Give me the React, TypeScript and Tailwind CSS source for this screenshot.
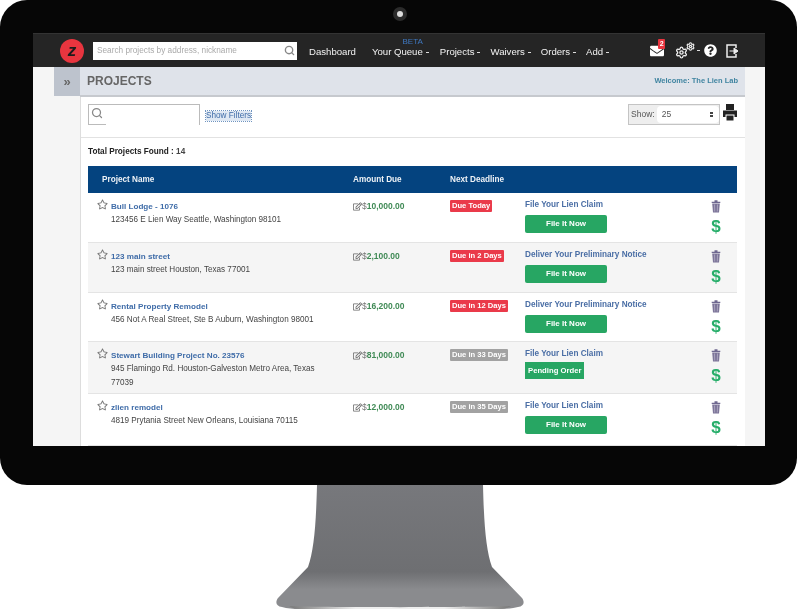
import { FaRegEdit, FaRegStar, FaQuestionCircle, FaEnvelope } from 'react-icons/fa';
import { Search, Settings } from 'lucide-react';

const projects = [
  { name: 'Bull Lodge - 1076', address: '123456 E Lien Way Seattle, Washington 98101', amount: '10,000.00', due: 'Due Today', urgent: true, action: 'File Your Lien Claim', rowClass: 'h-[50px] bg-white' },
  { name: '123 main street', address: '123 main street Houston, Texas 77001', amount: '2,100.00', due: 'Due in 2 Days', urgent: true, action: 'Deliver Your Preliminary Notice', rowClass: 'h-[50px] bg-[#f5f5f5]' },
  { name: 'Rental Property Remodel', address: '456 Not A Real Street, Ste B Auburn, Washington 98001', amount: '16,200.00', due: 'Due in 12 Days', urgent: true, action: 'Deliver Your Preliminary Notice', rowClass: 'h-[49px] bg-white' },
  { name: 'Stewart Building Project No. 23576', address: '945 Flamingo Rd. Houston-Galveston Metro Area, Texas 77039', amount: '81,000.00', due: 'Due in 33 Days', urgent: false, action: 'File Your Lien Claim', pending: true, rowClass: 'h-[52px] bg-[#f5f5f5]' },
  { name: 'zlien remodel', address: '4819 Prytania Street New Orleans, Louisiana 70115', amount: '12,000.00', due: 'Due in 35 Days', urgent: false, action: 'File Your Lien Claim', rowClass: 'h-[52px] bg-white' },
];

function NavItem({ label, caret = true }: { label: string; caret?: boolean }) {
  return (
    <span className="flex items-center gap-[3px] whitespace-nowrap leading-[10px]">
      {label}
      {caret && <span className="mt-[1px] h-[1px] w-[3px] bg-[#ddd]" />}
    </span>
  );
}

function TrashIcon() {
  return (
    <svg viewBox="0 0 10 13" className="h-[13px] w-[10px]">
      <path d="M3.5 1h3M.7 2.4h8.6" stroke="#6f6890" strokeWidth="1.4" />
      <path d="M1.2 3.4h7.6L8 12.6H2z" fill="#7d7599" />
      <path d="M3.5 4.5l.2 7M6.5 4.5l-.2 7" stroke="#b5b0c8" strokeWidth=".8" />
    </svg>
  );
}

function PrinterIcon() {
  return (
    <svg viewBox="0 0 14 17" className="h-[17px] w-[14px]" fill="#222">
      <path d="M3 0h8v6H3z" />
      <path d="M0 6.5h14V13h-2.5v-2.5h-9V13H0z" />
      <path d="M3.5 11.5h7V16.5h-7z" />
    </svg>
  );
}

function ProjectRow({ project }: { project: (typeof projects)[number] }) {
  return (
    <div className={`grid grid-cols-[265px_97px_75px_179px_24px] border-b border-[#e4e4e4] ${project.rowClass}`}>
      <div className="flex gap-[3px] pl-[9px] pt-[6px]">
        <FaRegStar className="h-[11px] w-[11px] shrink-0 text-[#777]" />
        <div className="w-[214px]">
          <div className="pt-[1px] text-[8.1px] font-bold leading-[13px] text-[#3f6ca8]">{project.name}</div>
          <div className="text-[8.15px] leading-[13.5px] text-[#444]">{project.address}</div>
        </div>
      </div>
      <div className="flex items-center self-start pt-[7px] text-[8.5px] font-bold leading-[12px] text-[#3f8a55]">
        <FaRegEdit className="h-[9px] w-[9px] text-[#666]" />
        <span className="font-normal text-[#777]">$</span>
        {project.amount}
      </div>
      <div className="flex items-start pt-[7px]">
        <span className={`rounded-[1px] px-[2px] text-[7.6px] font-bold leading-[12px] text-white ${project.urgent ? 'bg-[#ea3a4a]' : 'bg-[#a2a2a2]'}`}>
          {project.due}
        </span>
      </div>
      <div className="pt-[6px]">
        <div className="text-[8.2px] font-bold leading-[12px] text-[#4a6ea5]">{project.action}</div>
        {project.pending ? (
          <div className="mt-[2px] w-fit bg-[#27a663] px-[3px] text-[7.7px] font-bold leading-[17px] text-white">Pending Order</div>
        ) : (
          <button className="mt-[4px] block h-[18px] w-[82px] rounded-[2px] bg-[#27a663] text-center text-[8px] font-bold text-white">File It Now</button>
        )}
      </div>
      <div className="flex flex-col items-center pt-[7px]">
        <TrashIcon />
        <span className="mt-[4px] text-[17px] font-bold leading-[20px] text-[#27ae6a]">$</span>
      </div>
    </div>
  );
}

export default function App() {
  return (
    <div className="h-[610px] w-[800px] overflow-hidden bg-white font-['Liberation_Sans',Arial,sans-serif]">
      {/* Monitor bezel */}
      <div className="relative h-[485px] w-[797px] rounded-[27px] bg-[#060606] pl-[33px] pt-[33px]">
        <div className="absolute left-[393px] top-[7px] flex h-[14px] w-[14px] items-center justify-center rounded-full bg-[#2b2b2b]">
          <span className="h-[6px] w-[6px] rounded-full bg-[#ddd]" />
        </div>

        <div className="h-[413px] w-[732px] overflow-hidden border-t border-[#333] bg-[#f5f5f5] blur-[0.4px]">
          {/* Top bar */}
          <div className="flex h-[33px] items-center bg-[#252525] pl-[27px] text-[9.6px] text-[#f2f2f2]">
            <div className="flex h-[24px] w-[24px] items-center justify-center rounded-full bg-[#e8353f] text-[17px] font-bold italic leading-none text-[#1c1c1c]">z</div>
            <div className="ml-[9px] flex h-[18px] w-[204px] items-center justify-between bg-white pl-[4px] pr-[2px] text-[8.25px] text-[#aaa]">
              <span className="pt-[1px]">Search projects by address, nickname</span>
              <Search className="h-[11px] w-[11px] text-[#888]" strokeWidth={3} />
            </div>
            <div className="ml-[12px] flex items-center gap-[10px] pt-[2px]">
              <span className="mr-[6px] leading-[10px]">Dashboard</span>
              <span className="relative mr-[1px]">
                <NavItem label="Your Queue" />
                <span className="absolute -top-[9px] right-[6px] h-[7px] text-[8px] leading-[7px] text-[#3f78c0]">BETA</span>
              </span>
              <NavItem label="Projects" />
              <NavItem label="Waivers" />
              <NavItem label="Orders" />
              <NavItem label="Add" />
            </div>
            <div className="ml-[41px] flex items-center">
              <span className="relative">
                <FaEnvelope className="h-[14px] w-[14px] text-white" />
                <span className="absolute -right-[1px] -top-[5px] h-[10px] w-[7px] rounded-[1px] bg-[#e8353f] text-center text-[7px] font-bold leading-[10px] text-white">2</span>
              </span>
              <span className="ml-[11px] flex items-start">
                <Settings className="mt-[4px] h-[13px] w-[13px] text-[#eee]" strokeWidth={2.5} />
                <Settings className="-ml-[2px] h-[9px] w-[9px] text-[#eee]" strokeWidth={3} />
              </span>
              <span className="ml-[2px] h-[1px] w-[3px] bg-[#ddd]" />
              <FaQuestionCircle className="ml-[4px] h-[13px] w-[13px] text-white" />
              <svg viewBox="0 0 12 14" className="ml-[9px] h-[14px] w-[12px]" fill="none" stroke="#eee">
                <path d="M10 4V1H1v12h9v-3" strokeWidth="1.5" />
                <path d="M3.5 7H8V4l4 3-4 3V7" fill="#eee" strokeWidth="1" />
              </svg>
            </div>
          </div>

          {/* Page */}
          <div className="flex h-[379px] pl-[21px]">
            <div className="flex h-[29px] w-[26px] items-center justify-center bg-[#bdc3cd] text-[13px] font-bold leading-none text-[#666]">»</div>
            <div className="flex w-[665px] flex-col">
              <div className="flex h-[30px] shrink-0 items-center justify-between border-b-2 border-[#c6c9ce] bg-[#dfe3ea] pl-[7px] pr-[7px]">
                <span className="text-[12px] font-bold text-[#666]">PROJECTS</span>
                <span className="text-[7.5px] font-bold text-[#3f84a0]">Welcome: The Lien Lab</span>
              </div>
              <div className="flex-1 border-l border-[#ddd] bg-white">
                {/* Filters */}
                <div className="flex h-[41px] items-start border-b border-[#e2e2e2] pl-[7px] pt-[7px]">
                  <div className="flex h-[21px] w-[112px] flex-col justify-between border-l border-r border-t border-[#bbb] pl-[2px] pt-[2px]">
                    <Search className="h-[12px] w-[12px] text-[#888]" strokeWidth={2.5} />
                    <span className="-ml-[2px] h-[1px] w-[17px] bg-[#bbb]" />
                  </div>
                  <span className="ml-[6px] mt-[7px] bg-[#dfe8f3] text-[8.2px] leading-[10px] text-[#3f6ca8] outline-1 outline-dotted outline-[#6f94c0]">Show Filters</span>
                  <div className="ml-[377px] flex h-[21px] w-[92px] items-center border border-[#c4c4c4] bg-[#eee] pl-[2px] text-[8.5px] text-[#555]">
                    Show:
                    <span className="ml-[2px] flex h-[17px] flex-1 items-center justify-between rounded-[4px] bg-white pl-[5px] pr-[6px]">
                      25
                      <span className="flex flex-col gap-[1px]">
                        <span className="h-[2px] w-[3px] bg-[#444]" />
                        <span className="h-[2px] w-[3px] bg-[#444]" />
                      </span>
                    </span>
                  </div>
                  <span className="ml-[3px]">
                    <PrinterIcon />
                  </span>
                </div>

                <div className="pl-[7px] pt-[9px] text-[8.2px] font-bold leading-[10px] text-[#222]">
                  Total Projects Found : <span className="text-[#444]">14</span>
                </div>

                {/* Table */}
                <div className="ml-[7px] mt-[9px] w-[649px]">
                  <div className="grid h-[27px] grid-cols-[265px_97px_1fr] items-center bg-[#04437f] pt-[1px] text-[8.2px] font-bold text-[#eef2f6]">
                    <span className="pl-[14px]">Project Name</span>
                    <span>Amount Due</span>
                    <span>Next Deadline</span>
                  </div>
                  {projects.map((project) => (
                    <ProjectRow key={project.name} project={project} />
                  ))}
                </div>
              </div>
            </div>
          </div>
        </div>
      </div>

      {/* Monitor stand */}
      <svg viewBox="0 0 250 125" className="ml-[275px] block h-[125px] w-[250px]">
        <defs>
          <linearGradient id="stand" x1="0" y1="0" x2="0" y2="1">
            <stop offset="0" stopColor="#77787c" />
            <stop offset="0.7" stopColor="#6e6f72" />
            <stop offset="0.84" stopColor="#8a8b8e" />
            <stop offset="1" stopColor="#8a8b8e" />
          </linearGradient>
          <linearGradient id="base" x1="0" y1="0" x2="1" y2="0">
            <stop offset="0" stopColor="#777" />
            <stop offset="0.3" stopColor="#eee" />
            <stop offset="0.7" stopColor="#eee" />
            <stop offset="1" stopColor="#777" />
          </linearGradient>
        </defs>
        <path d="M42 0 H208 C209 40 211 65 217 82 L247 113 C250 117 249 121 243 122 C238 123.5 232 124 225 124 H25 C18 124 12 123.5 7 122 C1 121 0 117 3 113 L33 82 C39 65 41 40 42 0 Z" fill="url(#stand)" />
        <path d="M14 121 C30 122.5 220 122.5 236 121 C232 123.5 228 124 225 124 H25 C22 124 18 123.5 14 121 Z" fill="url(#base)" />
      </svg>
    </div>
  );
}
